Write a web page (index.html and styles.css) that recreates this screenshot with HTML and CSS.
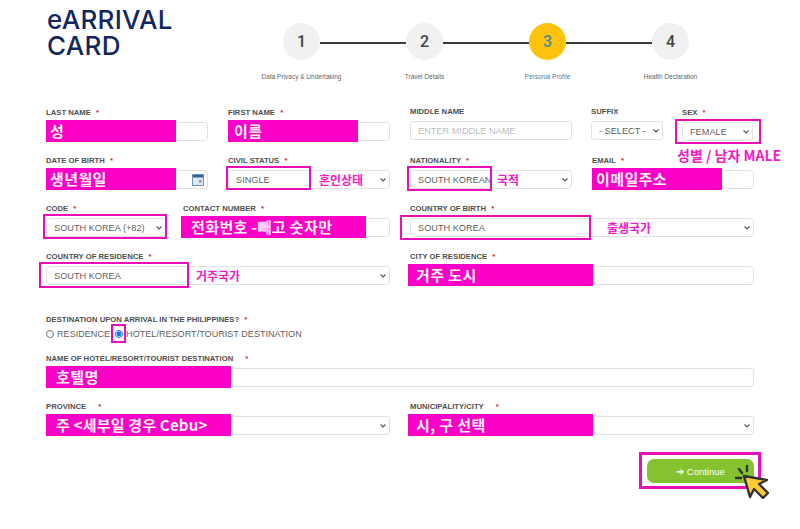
FILE: index.html
```html
<!DOCTYPE html>
<html lang="en">
<head>
    <meta charset="UTF-8">
    <meta name="viewport" content="width=device-width, initial-scale=1.0">
    <title>eArrival Card - Personal Profile</title>
    <link rel="stylesheet" href="styles.css">
</head>
<body>

    <header class="top">
        <h1 class="title">eARRIVAL<br>CARD</h1>
        <div class="stepper">
            <div class="track">
                <span class="circle">1</span>
                <span class="line"></span>
                <span class="circle">2</span>
                <span class="line"></span>
                <span class="circle circle-active">3</span>
                <span class="line"></span>
                <span class="circle">4</span>
            </div>
            <div class="step-labels">
                <span>Data Privacy &amp; Undertaking</span>
                <span>Travel Details</span>
                <span class="step-active">Personal Profile</span>
                <span>Health Declaration</span>
            </div>
        </div>
    </header>

    <form class="form">
        <div class="row">
            <div class="field">
                <label>LAST NAME <b>*</b></label>
                <div class="control">
                    <input type="text">
                    <div class="fill fill-short">성</div>
                </div>
            </div>
            <div class="field">
                <label>FIRST NAME <b>*</b></label>
                <div class="control">
                    <input type="text">
                    <div class="fill fill-short fill-name">이름</div>
                </div>
            </div>
            <div class="field field-up">
                <label>MIDDLE NAME</label>
                <div class="control">
                    <input type="text" placeholder="ENTER MIDDLE NAME">
                </div>
            </div>
            <div class="pair pair-end">
                <div class="field field-up suffix">
                    <label>SUFFIX</label>
                    <div class="control">
                        <select><option>- SELECT -</option></select>
                    </div>
                </div>
                <div class="field sex">
                    <label>SEX <b>*</b></label>
                    <div class="control">
                        <select><option>FEMALE</option></select>
                        <div class="ring ring-sex"></div>
                        <div class="note note-sex">성별 / 남자 MALE</div>
                    </div>
                </div>
            </div>
        </div>

        <div class="row">
            <div class="field">
                <label>DATE OF BIRTH <b>*</b></label>
                <div class="control">
                    <input type="text">
                    <svg class="calendar" viewBox="0 0 12 12">
                        <rect x="0.5" y="0.5" width="11" height="11" fill="#dfe9f3" stroke="#6f93b5"/>
                        <rect x="1" y="1" width="10" height="2.5" fill="#2f6596"/>
                        <rect x="7" y="6" width="2.5" height="2.5" fill="#7d9bb8"/>
                    </svg>
                    <div class="fill fill-short">생년월일</div>
                </div>
            </div>
            <div class="field">
                <label>CIVIL STATUS <b>*</b></label>
                <div class="control">
                    <select><option>SINGLE</option></select>
                    <div class="ring ring-civil"></div>
                    <div class="note note-civil">혼인상태</div>
                </div>
            </div>
            <div class="field">
                <label>NATIONALITY <b>*</b></label>
                <div class="control">
                    <select><option>SOUTH KOREAN</option></select>
                    <div class="ring ring-nation"></div>
                    <div class="note note-nation">국적</div>
                </div>
            </div>
            <div class="field">
                <label>EMAIL <b>*</b></label>
                <div class="control">
                    <input type="text">
                    <div class="fill fill-short">이메일주소</div>
                </div>
            </div>
        </div>

        <div class="row">
            <div class="pair span-2">
                <div class="field code">
                    <label>CODE <b>*</b></label>
                    <div class="control">
                        <select><option>SOUTH KOREA (+82)</option></select>
                        <div class="ring ring-code"></div>
                    </div>
                </div>
                <div class="field contact">
                    <label>CONTACT NUMBER <b>*</b></label>
                    <div class="control">
                        <input type="text">
                        <div class="fill fill-long fill-left fill-wide">전화번호 -빼고 숫자만</div>
                    </div>
                </div>
            </div>
            <div class="field span-2">
                <label>COUNTRY OF BIRTH <b>*</b></label>
                <div class="control">
                    <select><option>SOUTH KOREA</option></select>
                    <div class="ring ring-birth"></div>
                    <div class="note note-birth">출생국가</div>
                </div>
            </div>
        </div>

        <div class="row">
            <div class="field span-2">
                <label>COUNTRY OF RESIDENCE <b>*</b></label>
                <div class="control">
                    <select><option>SOUTH KOREA</option></select>
                    <div class="ring ring-residence"></div>
                    <div class="note note-residence">거주국가</div>
                </div>
            </div>
            <div class="field span-2">
                <label>CITY OF RESIDENCE <b>*</b></label>
                <div class="control">
                    <input type="text">
                    <div class="fill fill-long fill-left fill-pad">거주 도시</div>
                </div>
            </div>
        </div>

        <div class="destination">
            <label>DESTINATION UPON ARRIVAL IN THE PHILIPPINES? <b>*</b></label>
            <div class="radios">
                <input type="radio" name="destination" id="residence">
                <span class="radio-text">RESIDENCE</span>
                <span class="radio-wrap">
                    <input type="radio" name="destination" id="hotel" checked>
                    <span class="ring ring-radio"></span>
                </span>
                <span class="radio-text">HOTEL/RESORT/TOURIST DESTINATION</span>
            </div>
        </div>

        <div class="row row-single">
            <div class="field span-4">
                <label>NAME OF HOTEL/RESORT/TOURIST DESTINATION <b class="far">*</b></label>
                <div class="control">
                    <input type="text">
                    <div class="fill fill-long fill-wide">호텔명</div>
                </div>
            </div>
        </div>

        <div class="row">
            <div class="field span-2">
                <label>PROVINCE <b class="far">*</b></label>
                <div class="control">
                    <select><option></option></select>
                    <div class="fill fill-long fill-wide fill-tight">주 &lt;세부일 경우 Cebu&gt;</div>
                </div>
            </div>
            <div class="field span-2">
                <label>MUNICIPALITY/CITY <b class="far">*</b></label>
                <div class="control">
                    <select><option></option></select>
                    <div class="fill fill-long fill-left fill-pad">시, 구 선택</div>
                </div>
            </div>
        </div>

        <div class="actions">
            <div class="control">
                <button type="button" class="continue">➔ Continue</button>
                <div class="ring ring-continue"></div>
                <svg class="pointer" viewBox="0 0 36 40">
                    <path d="M3 19h5M6 10l3 4M14 7v5" fill="none" stroke="#333" stroke-width="2.4" stroke-linecap="round"/>
                    <path d="M11 17l6 21 4-8 9 9 5-5-9-9 8-4z" fill="#fdcb35" stroke="#333" stroke-width="2.4" stroke-linejoin="round"/>
                </svg>
            </div>
        </div>
    </form>

</body>
</html>
```

FILE: styles.css
```css
* {
    box-sizing: border-box;
}

body {
    margin: 0;
    height: 529px;
    overflow: hidden;
    background-color: white;
    font-family: "Liberation Sans", "Noto Sans CJK KR", sans-serif;
}

.top {
    display: flex;
    height: 107px;
    padding-left: 47px;
}

.title {
    width: 193px;
    margin: 7px 0 0 0;
    font-family: "Inter", sans-serif;
    font-size: 26px;
    line-height: 26px;
    font-weight: 500;
    letter-spacing: 0.3px;
    color: #14275c;
}

.stepper {
    width: 492px;
    margin-top: 23px;
}

.track {
    display: flex;
    align-items: center;
    padding-left: 43px;
}

.circle {
    display: flex;
    align-items: center;
    justify-content: center;
    width: 37px;
    height: 37px;
    border-radius: 50%;
    background-color: #f1f1f1;
    font-family: "Roboto", sans-serif;
    font-size: 16px;
    font-weight: 500;
    color: #444;
}

.circle-active {
    background-color: #fdc30e;
    color: #4d8a95;
}

.line {
    width: 86px;
    height: 2px;
    margin-top: 3px;
    background-color: #3a3a3a;
}

.step-labels {
    display: grid;
    grid-template-columns: repeat(4, 123px);
    margin-top: 12px;
    font-size: 6.5px;
    line-height: 10px;
    text-align: center;
    color: #666;
}

.step-active {
    color: #4a80ad;
}

.form {
    width: 708px;
    margin-left: 46px;
}

.row {
    display: grid;
    grid-template-columns: repeat(4, 162px);
    column-gap: 20px;
    height: 48px;
}

.pair {
    display: flex;
    gap: 19px;
}

.pair-end {
    margin-left: -1px;
}

.span-2 {
    grid-column: span 2;
}

.span-4 {
    grid-column: span 4;
}

.suffix {
    width: 72px;
}

.sex {
    width: 71px;
}

.code {
    width: 120px;
}

.contact {
    width: 207px;
    margin-left: -2px;
}

.field-up {
    margin-top: -1px;
}

label {
    display: block;
    height: 10px;
    margin-bottom: 5px;
    font-size: 7.7px;
    line-height: 12px;
    font-weight: bold;
    color: #505050;
}

label b {
    margin-left: 3px;
    color: #e03030;
}

label b.far {
    margin-left: 10px;
}

.control {
    position: relative;
    height: 19px;
}

input[type="text"], select {
    display: block;
    width: 100%;
    height: 19px;
    padding: 0 0 0 7px;
    border: 1px solid #e2e2e2;
    border-radius: 3px;
    background-color: white;
    font-family: "Liberation Sans", sans-serif;
    font-size: 9.2px;
    color: #5f5f5f;
}

select {
    appearance: none;
    background-image: url("data:image/svg+xml,%3Csvg xmlns='http://www.w3.org/2000/svg' width='6' height='4'%3E%3Cpath d='M.5.5l2.5 2.5 2.5-2.5' fill='none' stroke='%23555' stroke-width='1.1'/%3E%3C/svg%3E");
    background-repeat: no-repeat;
    background-position: right 3px center;
}

input::placeholder {
    color: #bdbdbd;
}

.calendar {
    position: absolute;
    top: 4px;
    left: 146px;
    width: 12px;
    height: 12px;
}

/* magenta annotations painted over the form */
.fill {
    position: absolute;
    top: -2px;
    left: 0;
    height: 22px;
    padding-left: 4px;
    background-color: #fd00c8;
    font-family: "Noto Sans CJK KR", sans-serif;
    font-size: 15px;
    line-height: 21px;
    font-weight: bold;
    letter-spacing: 0.4px;
    color: #fff2fb;
    white-space: nowrap;
}

.fill-short {
    width: 130px;
}

.fill-long {
    width: 185px;
}

.fill-left {
    left: -2px;
}

.fill-name {
    padding-left: 6px;
}

.fill-pad {
    padding-left: 8px;
}

.fill-wide {
    padding-left: 10px;
}

.fill-tight {
    letter-spacing: 0.2px;
}

.ring {
    position: absolute;
    border: 2px solid #e80fbb;
}

.ring-sex {
    top: -3px;
    left: -7px;
    width: 86px;
    height: 25px;
}

.ring-civil {
    top: -4px;
    left: -2px;
    width: 85px;
    height: 24px;
}

.ring-nation {
    top: -4px;
    left: -3px;
    width: 85px;
    height: 25px;
}

.ring-code {
    top: -4px;
    left: -3px;
    width: 124px;
    height: 25px;
}

.ring-birth {
    top: -3px;
    left: -10px;
    width: 191px;
    height: 25px;
}

.ring-residence {
    top: -4px;
    left: -7px;
    width: 150px;
    height: 26px;
}

.ring-radio {
    top: -6px;
    left: -4px;
    width: 15px;
    height: 19px;
}

.ring-continue {
    top: -7px;
    left: -8px;
    width: 122px;
    height: 37px;
    border-width: 3px;
}

.note {
    position: absolute;
    font-family: "Noto Sans CJK KR", sans-serif;
    font-size: 12px;
    line-height: 19px;
    font-weight: bold;
    color: #f01cc4;
    white-space: nowrap;
}

.note-sex {
    top: 24px;
    left: -5px;
    font-size: 14px;
}

.note-civil {
    top: 0;
    left: 91px;
}

.note-nation {
    top: 0;
    left: 87px;
}

.note-birth {
    top: 0;
    left: 197px;
}

.note-residence {
    top: 0;
    left: 150px;
}

.destination {
    height: 39px;
    margin-top: 15px;
}

.destination label {
    margin-bottom: 2px;
}

.radios {
    display: flex;
    align-items: center;
    height: 16px;
    font-size: 9.1px;
    color: #5f5f5f;
}

.radios input {
    width: 8px;
    height: 8px;
    margin: 0;
    accent-color: #1a73e8;
}

.radio-text {
    margin-left: 3px;
}

.radio-wrap {
    position: relative;
    display: flex;
    align-items: center;
    height: 8px;
    margin-left: 5px;
}

.row-single {
    display: block;
}

.actions {
    display: flex;
    justify-content: flex-end;
    padding-top: 10px;
}

.continue {
    display: block;
    width: 107px;
    height: 24px;
    border: none;
    border-radius: 7px;
    background-color: #84c32f;
    font-family: "Liberation Sans", sans-serif;
    font-size: 9.5px;
    color: white;
}

.pointer {
    position: absolute;
    top: 0;
    left: 86px;
    width: 36px;
    height: 40px;
}
```
